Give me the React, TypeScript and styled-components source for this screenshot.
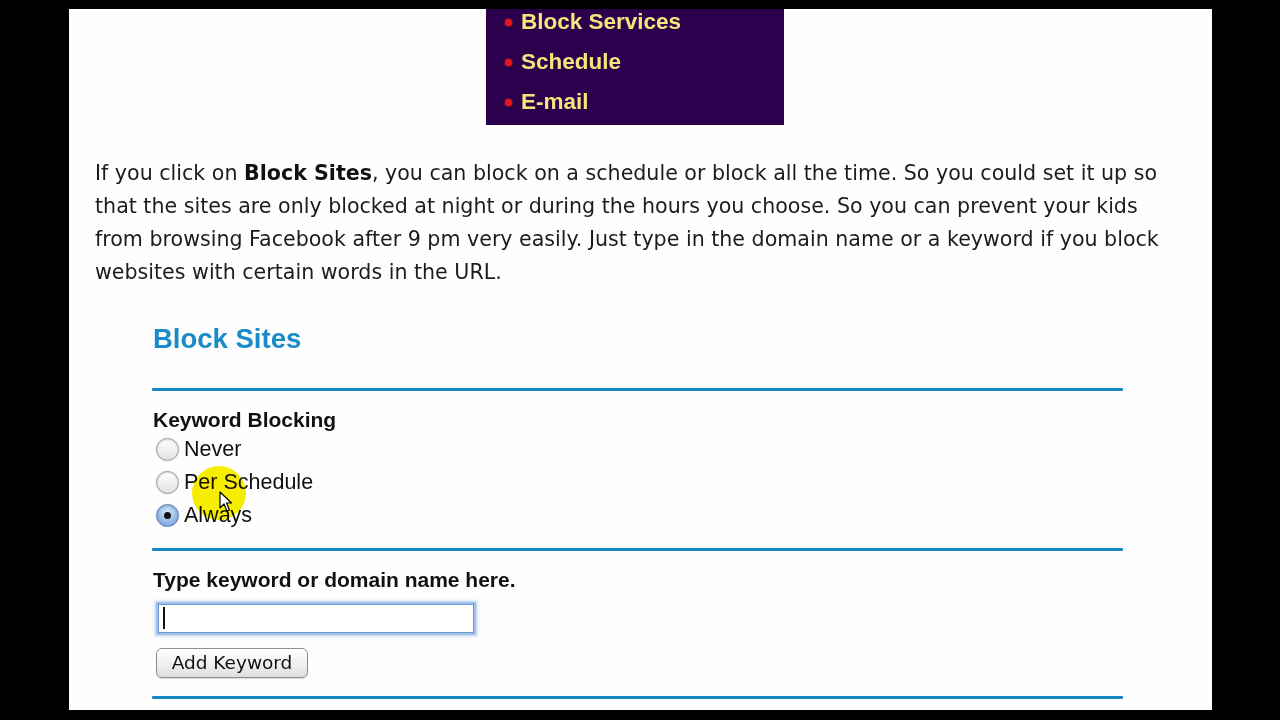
import React from "react";
import styled, { createGlobalStyle } from "styled-components";

const GlobalStyle = createGlobalStyle`
  html, body {
    margin: 0;
    padding: 0;
    background: #000;
  }
`;

const Page = styled.div`
  width: 1280px;
  height: 720px;
  background: #000;
  padding: 9px 68px 10px 69px;
  box-sizing: border-box;
  overflow: hidden;
`;

const Sheet = styled.div`
  position: relative;
  height: 100%;
  background: #fefefe;
  overflow: hidden;
`;

const MenuBox = styled.div`
  margin-left: 417px;
  width: 298px;
  height: 116px;
  background: #2b004c;
  overflow: hidden;
`;

const MenuList = styled.ul`
  list-style: none;
  margin: -7px 0 0;
  padding: 0 0 0 19px;
`;

const MenuItem = styled.li`
  display: flex;
  align-items: center;
  gap: 9px;
  height: 40px;
  font-family: "Liberation Sans", Arial, sans-serif;
  font-weight: bold;
  font-size: 22.5px;
  color: #f4e57c;
`;

const Dot = styled.span`
  width: 7px;
  height: 7px;
  border-radius: 50%;
  background: #e01818;
  box-shadow: 0 0 2px #ff3030;
`;

const Paragraph = styled.p`
  margin: 31.5px 0 0;
  padding: 0 35px 0 26px;
  font-family: "DejaVu Sans", Verdana, sans-serif;
  font-size: 20.6px;
  line-height: 33px;
  color: #1c1c1c;

  b {
    font-weight: bold;
    color: #111;
  }
`;

const Form = styled.div`
  margin: 34px 0 0 83px;
  width: 971px;
  font-family: "Liberation Sans", Arial, sans-serif;
`;

const Title = styled.h2`
  margin: 0 0 0 1px;
  height: 32px;
  line-height: 32px;
  font-size: 27.5px;
  font-weight: bold;
  color: #198bc9;
`;

const Rule = styled.div<{ gap: number }>`
  height: 3px;
  margin-top: ${(p) => p.gap}px;
  background: #1686c4;
  border-radius: 1px;
`;

const Heading = styled.div`
  margin: 16px 0 0 1px;
  height: 26px;
  line-height: 26px;
  font-size: 21px;
  font-weight: bold;
  color: #111;
`;

const RadioRow = styled.label`
  display: flex;
  align-items: center;
  height: 33px;
  padding-left: 4px;
  gap: 5px;
  font-size: 21.5px;
  color: #111;
`;

const RadioCircle = styled.span<{ checked?: boolean }>`
  position: relative;
  width: 23px;
  height: 23px;
  border-radius: 50%;
  box-sizing: border-box;
  border: 1px solid ${(p) => (p.checked ? "#5a7fb0" : "#9a9a9a")};
  background: ${(p) =>
    p.checked
      ? "radial-gradient(circle at 50% 35%, #d8e8fa 0%, #8fb6e6 60%, #6d9bd6 100%)"
      : "linear-gradient(#ffffff, #e2e2e2)"};
  box-shadow: inset 0 1px 2px rgba(0, 0, 0, 0.15), 0 0 1px rgba(0, 0, 0, 0.2);

  &::after {
    content: "";
    display: ${(p) => (p.checked ? "block" : "none")};
    position: absolute;
    left: 50%;
    top: 50%;
    width: 7px;
    height: 7px;
    margin: -3.5px 0 0 -3.5px;
    border-radius: 50%;
    background: #111;
  }
`;

const Input = styled.div`
  margin: 11px 0 0 6px;
  width: 316px;
  height: 29px;
  box-sizing: border-box;
  border: 1px solid #6d98cf;
  background: #fff;
  box-shadow: 0 0 0 2px #9fc0ea, 0 0 3px 3px rgba(120, 160, 220, 0.5);
  display: flex;
  align-items: center;
  padding-left: 4px;
`;

const Caret = styled.span`
  width: 2px;
  height: 22px;
  background: #111;
`;

const Button = styled.button`
  display: block;
  margin: 15px 0 0 4px;
  width: 152px;
  height: 30px;
  border: 1px solid #8e8e8e;
  border-radius: 6px;
  background: linear-gradient(#ffffff 0%, #f1f1f1 50%, #dedede 100%);
  box-shadow: 0 1px 1px rgba(0, 0, 0, 0.15);
  font-family: "DejaVu Sans", Verdana, sans-serif;
  font-size: 18.5px;
  color: #111;
  padding: 0;
`;

const Highlight = styled.div`
  position: absolute;
  left: 123px;
  top: 457px;
  width: 54px;
  height: 54px;
  border-radius: 50%;
  background: #f7ee00;
  mix-blend-mode: multiply;
  filter: blur(0.6px);
`;

const Pointer = styled.svg`
  position: absolute;
  left: 150px;
  top: 482px;
`;

const options = [
  { label: "Never", checked: false },
  { label: "Per Schedule", checked: false },
  { label: "Always", checked: true },
];

export default function App(): JSX.Element {
  return (
    <>
      <GlobalStyle />
      <Page>
        <Sheet>
          <MenuBox>
            <MenuList>
              {["Block Services", "Schedule", "E-mail"].map((t) => (
                <MenuItem key={t}>
                  <Dot />
                  {t}
                </MenuItem>
              ))}
            </MenuList>
          </MenuBox>

          <Paragraph>
            If you click on <b>Block Sites</b>, you can block on a schedule or
            block all the time. So you could set it up so that the sites are
            only blocked at night or during the hours you choose. So you can
            prevent your kids from browsing Facebook after 9 pm very easily.
            Just type in the domain name or a keyword if you block websites
            with certain words in the URL.
          </Paragraph>

          <Form>
            <Title>Block Sites</Title>
            <Rule gap={33} />
            <Heading>Keyword Blocking</Heading>
            {options.map((o) => (
              <RadioRow key={o.label}>
                <RadioCircle checked={o.checked} />
                {o.label}
              </RadioRow>
            ))}
            <Rule gap={16} />
            <Heading>Type keyword or domain name here.</Heading>
            <Input>
              <Caret />
            </Input>
            <Button>Add Keyword</Button>
            <Rule gap={18} />
          </Form>

          <Highlight />
          <Pointer width="14" height="22" viewBox="0 0 14 22">
            <path
              d="M1 1 L1 17 L5 13 L8 20 L10.5 19 L7.5 12 L12.5 12 Z"
              fill="#fff"
              stroke="#000"
              strokeWidth="1.2"
              strokeLinejoin="round"
            />
          </Pointer>
        </Sheet>
      </Page>
    </>
  );
}
